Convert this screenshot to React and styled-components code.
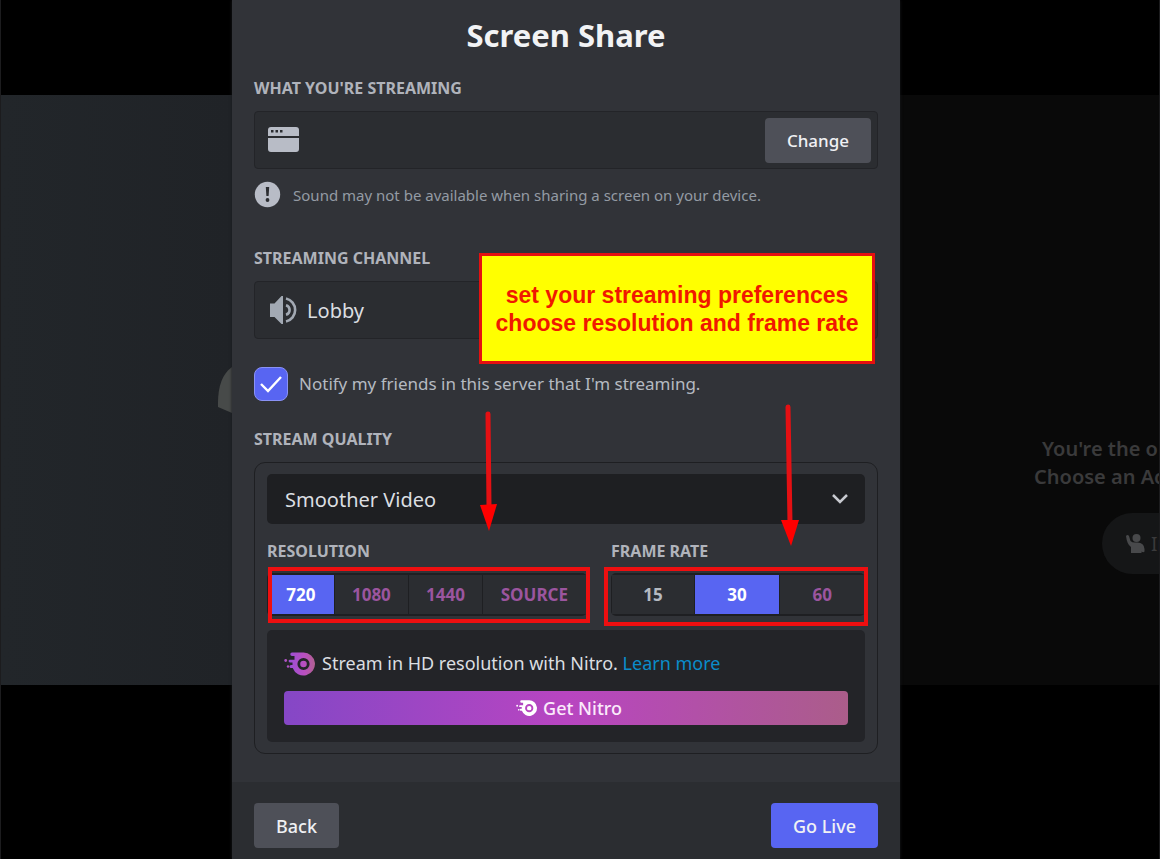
import { useState } from 'react';
import styled, { createGlobalStyle } from 'styled-components';

const GlobalStyle = createGlobalStyle`
  * {
    box-sizing: border-box;
  }

  body {
    margin: 0;
    background: #000;
    font-family: 'Noto Sans', 'Open Sans', sans-serif;
    color: #dbdee1;
  }

  button, select, input {
    font-family: inherit;
  }
`;

const Stage = styled.div`
  min-height: 100vh;
  display: grid;
  grid-template-columns: 232fr minmax(0, 668px) 260fr;
  border-left: 1px solid #1c1c1e;
  border-right: 1px solid #1c1c1e;
`;

const Side = styled.aside`
  padding: 95px 0 174px;
  display: flex;
  min-width: 0;
`;

const Tile = styled.div`
  flex: 1;
  min-width: 0;
  overflow: hidden;
  display: flex;
  flex-direction: column;
  background: ${({ $tone }) => $tone};
`;

const Avatar = styled.svg`
  display: block;
  width: 14px;
  height: 46px;
  margin: 272px 0 0 auto;
`;

const Invite = styled.div`
  padding: 340px 0 0 134px;
  font-size: 20px;
  line-height: 28px;
  font-weight: 600;
  color: #3a3a3b;
  white-space: nowrap;
`;

const InviteLine = styled.p`
  margin: 0;
  padding-left: ${({ $inset }) => ($inset ? '8px' : '0')};
`;

const InviteButton = styled.button`
  display: flex;
  align-items: center;
  gap: 6px;
  height: 61px;
  margin: 22px 0 0 68px;
  padding: 0 24px;
  border: 0;
  border-radius: 31px;
  background: #151617;
  color: #3a3a3b;
  font-size: 19px;
`;

const Modal = styled.main`
  position: relative;
  z-index: 1;
  display: flex;
  flex-direction: column;
  background: #313338;
  box-shadow: 0 0 3px #1a1b1e;
`;

const Body = styled.div`
  flex: 1;
  padding: 14px 22px 28px;
`;

const Title = styled.h1`
  margin: 0 0 22px;
  font-size: 31px;
  line-height: 42px;
  font-weight: 700;
  text-align: center;
  color: #f2f3f5;
`;

const SectionLabel = styled.h2`
  margin: 0 0 13px;
  font-size: 16px;
  line-height: 20px;
  font-weight: 700;
  color: #b0b3bb;
  text-transform: uppercase;
`;

const Field = styled.div`
  display: flex;
  align-items: center;
  gap: 8px;
  height: 58px;
  padding: 0 6px 0 13px;
  border: 1px solid #232428;
  border-radius: 4px;
  background: #2b2d31;
  font-size: 20px;
  color: #dbdee1;
`;

const Button = styled.button`
  height: 45px;
  padding: 0 22px;
  border: 0;
  border-radius: 4px;
  background: ${({ $primary }) => ($primary ? '#5865f2' : '#4e5058')};
  color: #f0f1f4;
  font-size: 18px;
  font-weight: 500;
`;

const ChangeButton = styled(Button)`
  margin-left: auto;
  font-size: 17px;
`;

const Note = styled.p`
  display: flex;
  align-items: center;
  gap: 12px;
  margin: 12px 0 40px;
  height: 27px;
  font-size: 15px;
  color: #949ba4;
`;

const CheckLabel = styled.label`
  display: flex;
  align-items: center;
  gap: 11px;
  margin: 28px 0 28px;
  font-size: 17px;
  line-height: 34px;
  color: #b5bac1;
`;

const CheckBox = styled.input`
  appearance: none;
  width: 34px;
  height: 34px;
  margin: 0;
  border: 1px solid #8a92f5;
  border-radius: 8px;
  background: #2b2d31;

  &:checked {
    background: #5865f2 url("data:image/svg+xml,%3Csvg xmlns='http://www.w3.org/2000/svg' viewBox='0 0 32 32'%3E%3Cpath d='M6 16l7 7L26 9' fill='none' stroke='white' stroke-width='2.4'/%3E%3C/svg%3E") center / 32px no-repeat;
  }
`;

const QualityCard = styled.section`
  padding: 11px 12px;
  border: 1px solid #1e1f22;
  border-radius: 11px;
`;

const SelectWrap = styled.div`
  display: grid;
  align-items: center;
  margin-bottom: 17px;

  > * {
    grid-area: 1 / 1;
  }

  svg {
    justify-self: end;
    margin-right: 16px;
    pointer-events: none;
  }
`;

const Select = styled.select`
  appearance: none;
  width: 100%;
  height: 50px;
  padding: 0 18px;
  border: 0;
  border-radius: 5px;
  background: #1e1f22;
  color: #dbdee1;
  font-size: 20px;
`;

const Options = styled.div`
  display: grid;
  grid-template-columns: 320fr 254fr;
  gap: 24px;
  margin-bottom: 14px;
`;

const Group = styled.fieldset`
  min-width: 0;
  margin: 0;
  padding: 0;
  border: 0;
`;

const GroupLabel = styled.legend`
  padding: 0;
  margin-bottom: 12px;
  font-size: 16px;
  line-height: 20px;
  font-weight: 700;
  color: #b0b3bb;
  text-transform: uppercase;
`;

const SegmentsWrap = styled.div`
  position: relative;
`;

const Segments = styled.div`
  display: grid;
  grid-template-columns: ${({ $columns }) => $columns};
  gap: 1px;
  height: 43px;
  padding: 2px 1px;
  border-radius: 5px;
  background: #1e1f22;
  overflow: hidden;
`;

const Segment = styled.label`
  display: flex;
  align-items: center;
  justify-content: center;
  background: #2b2d31;
  color: ${({ $nitro }) => ($nitro ? '#9b559f' : '#b5bac1')};
  font-size: 17px;
  font-weight: 700;

  &:has(input:checked) {
    background: #5865f2;
    color: #fff;
  }

  input {
    appearance: none;
    width: 0;
    height: 0;
    margin: 0;
  }
`;

// red outline drawn over a group of segments
const Highlight = styled.div`
  position: absolute;
  top: -6px;
  bottom: ${({ $bottom }) => $bottom};
  left: ${({ $left }) => $left};
  right: -3px;
  border: 4px solid #ee0f10;
  pointer-events: none;
`;

const Promo = styled.div`
  padding: 17px;
  border-radius: 5px;
  background: #232428;
`;

const PromoText = styled.p`
  display: flex;
  align-items: center;
  gap: 7px;
  margin: 0 0 11px;
  font-size: 18px;
  line-height: 33px;
  color: #dbdee1;
`;

const Link = styled.a`
  color: #0a8cca;
  text-decoration: none;
`;

const NitroButton = styled.button`
  display: flex;
  align-items: center;
  justify-content: center;
  gap: 6px;
  width: 100%;
  height: 34px;
  padding: 0 0 0 6px;
  border: 0;
  border-radius: 4px;
  background: linear-gradient(90deg, #8547c6, #b845c1 50%, #ab5d8a);
  color: #fbeafb;
  font-size: 18px;
  font-weight: 500;
`;

const Footer = styled.footer`
  display: flex;
  justify-content: space-between;
  align-items: flex-start;
  padding: 21px 22px 11px;
  background: #2b2d31;
`;

const Callout = styled.div`
  position: absolute;
  top: 253px;
  left: 247px;
  right: 25px;
  height: 111px;
  display: flex;
  align-items: center;
  justify-content: center;
  border: 3px solid #e51010;
  background: #ffff00;
  color: #f01800;
  font-family: 'Liberation Sans', Arial, sans-serif;
  font-size: 23px;
  line-height: 28px;
  font-weight: 700;
  text-align: center;
  white-space: nowrap;
`;

const Arrow = styled.svg`
  position: absolute;
  top: ${({ $top }) => $top};
  left: ${({ $left }) => $left};
  width: 20px;
  height: 142px;
  pointer-events: none;
`;

const WindowIcon = () => (
  <svg width="32" height="28" viewBox="0 0 32 28" fill="#b8bcc6" aria-hidden="true">
    <path d="M4 1h24a3 3 0 0 1 3 3v6H0V4a3 3 0 0 1 3-3z" />
    <path d="M0 12h31v11a3 3 0 0 1-3 3H3a3 3 0 0 1-3-3z" />
    <path d="M3 4h2.500v2.500H3zM7.500 4H10v2.500H7.500zM12 4h2.500v2.500H12z" fill="#2b2d31" />
  </svg>
);

const AlertIcon = () => (
  <svg width="27" height="27" viewBox="0 0 27 27" aria-hidden="true">
    <circle cx="13.500" cy="13.500" r="12.700" fill="#b8bcc6" />
    <path d="M11.800 6h3.400l-.6 9h-2.200z" fill="#2b2d31" />
    <circle cx="13.500" cy="19" r="1.900" fill="#2b2d31" />
  </svg>
);

const SpeakerIcon = () => (
  <svg width="31" height="30" viewBox="0 0 31 30" aria-hidden="true">
    <path d="M13.500 1H15v28h-1.500l-7-7H2V8.500h4.500z" fill="#a2a9b3" />
    <path d="M18 10.200a5 5 0 0 1 0 9.600M18 3.500a11.800 11.800 0 0 1 0 23" fill="none" stroke="#a2a9b3" strokeWidth="2.600" />
  </svg>
);

const NitroIcon = ({ width, fill, hole }) => (
  <svg width={width} height={(width * 24) / 31} viewBox="0 0 31 24" aria-hidden="true">
    <defs>
      <linearGradient id="nitro" x1="0" x2="1">
        <stop offset="0" stopColor="#9a4fd6" />
        <stop offset=".6" stopColor="#b94fc0" />
        <stop offset="1" stopColor="#b0618f" />
      </linearGradient>
    </defs>
    <g fill={fill}>
      <path d="M8 .5h11.500a11.500 11.500 0 1 1-10.800 15.500H7a1.500 1.500 0 0 1 0-3h1.500v-2.500H6a1.400 1.400 0 0 1 0-2.800h4.500V4H8A1.700 1.700 0 0 1 8 .5z" />
      <circle cx="1.700" cy="8.500" r="1.400" />
      <circle cx="4" cy="14.500" r="1.200" />
    </g>
    <circle cx="19.500" cy="12" r="4.700" fill="none" stroke={hole} strokeWidth="2.800" />
  </svg>
);

const ChevronIcon = () => (
  <svg width="18" height="12" viewBox="0 0 18 12" aria-hidden="true">
    <path d="M2 2l7 7 7-7" fill="none" stroke="#c8cad0" strokeWidth="2.500" />
  </svg>
);

const WaveIcon = () => (
  <svg width="19" height="21" viewBox="0 0 19 21" fill="#48494b" aria-hidden="true">
    <circle cx="10.500" cy="5" r="4" />
    <path d="M0 3q1.500-2 3 0l1.500 5q2 2 6 1.500 7.500-.5 8 6.500v2.500q-1 1.500-3 0V20H5v-6Q1 11.500 0 3z" />
  </svg>
);

const RESOLUTIONS = [
  { value: '720' },
  { value: '1080', nitro: true },
  { value: '1440', nitro: true },
  { value: 'SOURCE', nitro: true },
];

const FRAME_RATES = [{ value: '15' }, { value: '30' }, { value: '60', nitro: true }];

function SegmentGroup({ label, name, options, columns, initial, left, bottom }) {
  const [selected, setSelected] = useState(initial);

  return (
    <Group>
      <GroupLabel>{label}</GroupLabel>
      <SegmentsWrap>
        <Segments $columns={columns}>
          {options.map(({ value, nitro }) => (
            <Segment key={value} $nitro={nitro}>
              <input
                type="radio"
                name={name}
                value={value}
                checked={selected === value}
                onChange={() => setSelected(value)}
              />
              {value}
            </Segment>
          ))}
        </Segments>
        <Highlight $left={left} $bottom={bottom} />
      </SegmentsWrap>
    </Group>
  );
}

function App() {
  return (
    <>
      <GlobalStyle />
      <Stage>
        <Side>
          <Tile $tone="linear-gradient(90deg, #22262a, #202327)">
            <Avatar viewBox="0 0 14 46">
              <path d="M14 0Q0 10 0 36v4l14 6z" fill="#474a49" />
            </Avatar>
          </Tile>
        </Side>

        <Modal>
          <Body>
            <Title>Screen Share</Title>

            <SectionLabel>What you're streaming</SectionLabel>
            <Field>
              <WindowIcon />
              <ChangeButton type="button">Change</ChangeButton>
            </Field>
            <Note>
              <AlertIcon />
              Sound may not be available when sharing a screen on your device.
            </Note>

            <SectionLabel>Streaming channel</SectionLabel>
            <Field>
              <SpeakerIcon />
              Lobby
            </Field>

            <CheckLabel>
              <CheckBox type="checkbox" defaultChecked />
              Notify my friends in this server that I'm streaming.
            </CheckLabel>

            <SectionLabel>Stream quality</SectionLabel>
            <QualityCard>
              <SelectWrap>
                <Select aria-label="Stream quality" defaultValue="smooth">
                  <option value="smooth">Smoother Video</option>
                </Select>
                <ChevronIcon />
              </SelectWrap>

              <Options>
                <SegmentGroup
                  label="Resolution"
                  name="resolution"
                  options={RESOLUTIONS}
                  columns="66fr 74fr 73fr 104fr"
                  initial="720"
                  left="1px"
                  bottom="-7px"
                />
                <SegmentGroup
                  label="Frame rate"
                  name="frame-rate"
                  options={FRAME_RATES}
                  columns="82fr 85fr 84fr"
                  initial="30"
                  left="-7px"
                  bottom="-10px"
                />
              </Options>

              <Promo>
                <PromoText>
                  <NitroIcon width={31} fill="url(#nitro)" hole="#232428" />
                  <span>
                    Stream in HD resolution with Nitro. <Link href="#nitro-info">Learn more</Link>
                  </span>
                </PromoText>
                <NitroButton type="button">
                  <NitroIcon width={21} fill="#fff" hole="#b845c1" />
                  Get Nitro
                </NitroButton>
              </Promo>
            </QualityCard>
          </Body>

          <Footer>
            <Button type="button">Back</Button>
            <Button type="button" $primary>
              Go Live
            </Button>
          </Footer>

          <Callout>
            set your streaming preferences
            <br />
            choose resolution and frame rate
          </Callout>
          <Arrow $top="411px" $left="247px" viewBox="0 0 20 142">
            <path d="M9 3l1 92" stroke="#e51013" strokeWidth="5" strokeLinecap="round" />
            <path d="M1 94l17-1-8 27z" fill="#ff0000" />
          </Arrow>
          <Arrow $top="404px" $left="548px" viewBox="0 0 20 142">
            <path d="M8 3l2 116" stroke="#e51013" strokeWidth="5" strokeLinecap="round" />
            <path d="M1 116h18l-8 26z" fill="#ff0000" />
          </Arrow>
        </Modal>

        <Side>
          <Tile $tone="#090909">
            <Invite>
              <InviteLine $inset>You're the only one</InviteLine>
              <InviteLine>Choose an Activity</InviteLine>
              <InviteButton type="button">
                <WaveIcon />
                Invite
              </InviteButton>
            </Invite>
          </Tile>
        </Side>
      </Stage>
    </>
  );
}

export default App;
